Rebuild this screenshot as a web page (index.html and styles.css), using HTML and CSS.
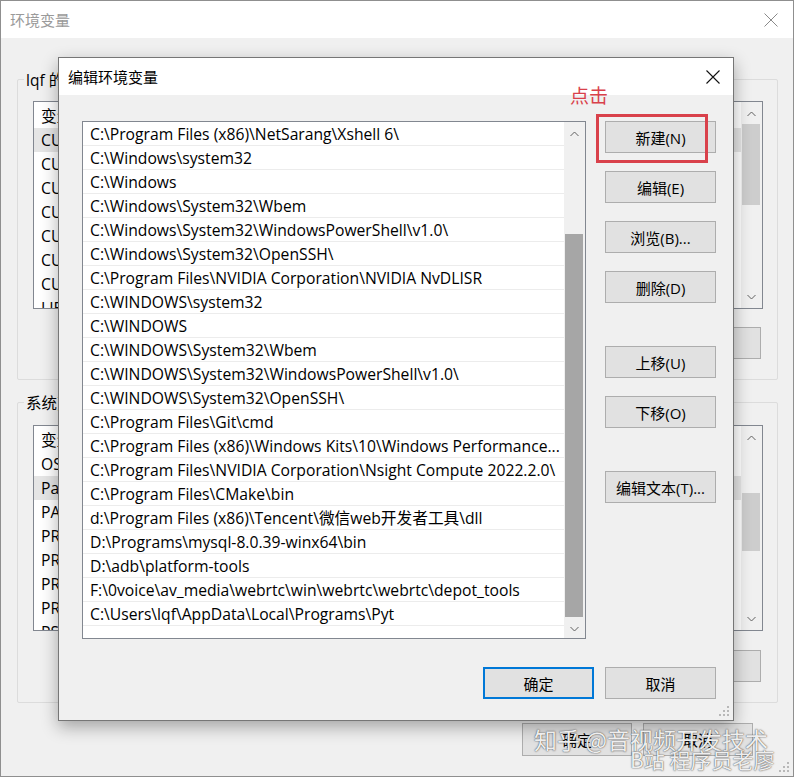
FILE: index.html
```html
<!DOCTYPE html>
<html lang="zh-CN">
<head>
<meta charset="utf-8">
<title>编辑环境变量</title>
<link rel="stylesheet" href="styles.css">
</head>
<body>
<div class="desk">
  <div class="bgwin">
    <div class="bg-title">
      <span>环境变量</span>
      <svg class="bg-close" width="14" height="14" viewBox="0 0 14 14"><path d="M0.5 0.5 L13.5 13.5 M13.5 0.5 L0.5 13.5" stroke="#8a8a8a" stroke-width="1" fill="none"/></svg>
    </div>
    <div class="bg-body">
      <div class="group group-user">
        <div class="group-label">lqf 的用户变量(U)</div>
        <div class="lb lb-user">
          <div class="lb-rows">
            <div class="lb-head"><span class="c1">变量</span><span class="c2">值</span></div>
            <div class="lb-row sel"><span class="c1">CUDA_PATH</span><span class="c2">C:\Program Files\NVIDIA GPU Computing Toolkit</span></div>
            <div class="lb-row"><span class="c1">CUDA_PATH_V11_8</span><span class="c2">C:\Program Files\NVIDIA GPU Computing Toolkit</span></div>
            <div class="lb-row"><span class="c1">CUDA_PATH_V12_0</span><span class="c2">C:\Program Files\NVIDIA GPU Computing Toolkit</span></div>
            <div class="lb-row"><span class="c1">CUDNN_HOME</span><span class="c2">C:\Program Files\NVIDIA\CUDNN</span></div>
            <div class="lb-row"><span class="c1">CUDA_BIN</span><span class="c2">%CUDA_PATH%\bin</span></div>
            <div class="lb-row"><span class="c1">CUDA_LIB</span><span class="c2">%CUDA_PATH%\lib\x64</span></div>
            <div class="lb-row"><span class="c1">CUDA_INC</span><span class="c2">%CUDA_PATH%\include</span></div>
            <div class="lb-row"><span class="c1">LIBPATH</span><span class="c2">C:\lib</span></div>
          </div>
          <div class="vscroll">
            <div class="arr"><svg width="9" height="6" viewBox="0 0 9 6"><path d="M0.5 5 L4.5 1 L8.5 5" stroke="#606060" fill="none"/></svg></div>
            <div class="track"><div class="thumb thumb-user"></div></div>
            <div class="arr"><svg width="9" height="6" viewBox="0 0 9 6"><path d="M0.5 1 L4.5 5 L8.5 1" stroke="#606060" fill="none"/></svg></div>
          </div>
        </div>
        <div class="btnrow">
          <button class="btn">新建(N)...</button>
          <button class="btn">编辑(E)...</button>
          <button class="btn">删除(D)</button>
        </div>
      </div>

      <div class="group group-sys">
        <div class="group-label">系统变量(S)</div>
        <div class="lb lb-sys">
          <div class="lb-rows">
            <div class="lb-head"><span class="c1">变量</span><span class="c2">值</span></div>
            <div class="lb-row"><span class="c1">OS</span><span class="c2">Windows_NT</span></div>
            <div class="lb-row sel"><span class="c1">Path</span><span class="c2">C:\Program Files (x86)\NetSarang\Xshell 6\</span></div>
            <div class="lb-row"><span class="c1">PATHEXT</span><span class="c2">.COM;.EXE;.BAT;.CMD;.VBS;.VBE;.JS</span></div>
            <div class="lb-row"><span class="c1">PROCESSOR_ARCHITECTURE</span><span class="c2">AMD64</span></div>
            <div class="lb-row"><span class="c1">PROCESSOR_IDENTIFIER</span><span class="c2">Intel64 Family 6 Model 151</span></div>
            <div class="lb-row"><span class="c1">PROCESSOR_LEVEL</span><span class="c2">6</span></div>
            <div class="lb-row"><span class="c1">PROCESSOR_REVISION</span><span class="c2">9702</span></div>
            <div class="lb-row"><span class="c1">PSModulePath</span><span class="c2">%ProgramFiles%\WindowsPowerShell</span></div>
          </div>
          <div class="vscroll">
            <div class="arr"><svg width="9" height="6" viewBox="0 0 9 6"><path d="M0.5 5 L4.5 1 L8.5 5" stroke="#606060" fill="none"/></svg></div>
            <div class="track"><div class="thumb thumb-sys"></div></div>
            <div class="arr"><svg width="9" height="6" viewBox="0 0 9 6"><path d="M0.5 1 L4.5 5 L8.5 1" stroke="#606060" fill="none"/></svg></div>
          </div>
        </div>
        <div class="btnrow">
          <button class="btn">新建(W)...</button>
          <button class="btn">编辑(I)...</button>
          <button class="btn">删除(L)</button>
        </div>
      </div>

      <div class="bg-actions">
        <button class="btn btn-bg">确定</button>
        <button class="btn btn-bg">取消</button>
      </div>
    </div>
    <svg class="grip grip-bg" width="11" height="11" viewBox="0 0 11 11"><g fill="#b8b8b8"><rect x="8" y="0" width="2" height="2"/><rect x="4" y="4" width="2" height="2"/><rect x="8" y="4" width="2" height="2"/><rect x="0" y="8" width="2" height="2"/><rect x="4" y="8" width="2" height="2"/><rect x="8" y="8" width="2" height="2"/></g></svg>
  </div>

  <div class="dlg">
    <div class="dlg-title">
      <span>编辑环境变量</span>
      <svg width="14" height="14" viewBox="0 0 14 14"><path d="M0.5 0.5 L13.5 13.5 M13.5 0.5 L0.5 13.5" stroke="#111" stroke-width="1.1" fill="none"/></svg>
    </div>
    <div class="dlg-body">
      <div class="dlg-main">
        <div class="plist">
          <div class="plist-rows">
            <div class="prow">C:\Program Files (x86)\NetSarang\Xshell 6\</div>
            <div class="prow">C:\Windows\system32</div>
            <div class="prow">C:\Windows</div>
            <div class="prow">C:\Windows\System32\Wbem</div>
            <div class="prow">C:\Windows\System32\WindowsPowerShell\v1.0\</div>
            <div class="prow">C:\Windows\System32\OpenSSH\</div>
            <div class="prow">C:\Program Files\NVIDIA Corporation\NVIDIA NvDLISR</div>
            <div class="prow">C:\WINDOWS\system32</div>
            <div class="prow">C:\WINDOWS</div>
            <div class="prow">C:\WINDOWS\System32\Wbem</div>
            <div class="prow">C:\WINDOWS\System32\WindowsPowerShell\v1.0\</div>
            <div class="prow">C:\WINDOWS\System32\OpenSSH\</div>
            <div class="prow">C:\Program Files\Git\cmd</div>
            <div class="prow">C:\Program Files (x86)\Windows Kits\10\Windows Performance...</div>
            <div class="prow">C:\Program Files\NVIDIA Corporation\Nsight Compute 2022.2.0\</div>
            <div class="prow">C:\Program Files\CMake\bin</div>
            <div class="prow">d:\Program Files (x86)\Tencent\微信web开发者工具\dll</div>
            <div class="prow">D:\Programs\mysql-8.0.39-winx64\bin</div>
            <div class="prow">D:\adb\platform-tools</div>
            <div class="prow">F:\0voice\av_media\webrtc\win\webrtc\webrtc\depot_tools</div>
            <div class="prow">C:\Users\lqf\AppData\Local\Programs\Pyt</div>
            <div class="prow"></div>
          </div>
          <div class="vscroll vscroll-p">
            <div class="arr"><svg width="9" height="6" viewBox="0 0 9 6"><path d="M0.5 5 L4.5 1 L8.5 5" stroke="#606060" fill="none"/></svg></div>
            <div class="track"><div class="thumb thumb-p"></div></div>
            <div class="arr"><svg width="9" height="6" viewBox="0 0 9 6"><path d="M0.5 1 L4.5 5 L8.5 1" stroke="#606060" fill="none"/></svg></div>
          </div>
        </div>
        <div class="dlg-btns">
          <button class="btn btn-d">新建(N)</button>
          <button class="btn btn-d">编辑(E)</button>
          <button class="btn btn-d">浏览(B)...</button>
          <button class="btn btn-d">删除(D)</button>
          <button class="btn btn-d gap-lg">上移(U)</button>
          <button class="btn btn-d">下移(O)</button>
          <button class="btn btn-d gap-lg">编辑文本(T)...</button>
        </div>
      </div>
      <div class="dlg-actions">
        <button class="btn btn-d btn-default">确定</button>
        <button class="btn btn-d">取消</button>
      </div>
    </div>
    <div class="note">点击</div>
    <div class="note-box"></div>
    <svg class="grip grip-dlg" width="11" height="11" viewBox="0 0 11 11"><g fill="#b8b8b8"><rect x="8" y="0" width="2" height="2"/><rect x="4" y="4" width="2" height="2"/><rect x="8" y="4" width="2" height="2"/><rect x="0" y="8" width="2" height="2"/><rect x="4" y="8" width="2" height="2"/><rect x="8" y="8" width="2" height="2"/></g></svg>
  </div>

  <div class="wm wm1">知乎 @音视频开发技术</div>
  <div class="wm wm2">B站 程序员老廖</div>
</div>
</body>
</html>
```

FILE: styles.css
```css
* { box-sizing: border-box; }
html, body { margin: 0; padding: 0; }
body {
  width: 794px;
  height: 777px;
  overflow: hidden;
  background: #f0f0f0;
  font-family: "Open Sans", "Noto Sans CJK SC", sans-serif;
  color: #000;
}
.desk { position: relative; width: 794px; height: 777px; }

/* background window */
.bgwin {
  position: relative;
  width: 794px;
  height: 777px;
  border: 1px solid #8f8f8f;
  background: #f0f0f0;
  display: flex;
  flex-direction: column;
}
.bg-title {
  height: 37px;
  flex: none;
  background: #fff;
  display: flex;
  align-items: center;
  justify-content: space-between;
  padding: 0 15px 0 9px;
  color: #9a9a9a;
  font-size: 15px;
  font-family: "Noto Sans CJK SC", sans-serif;
}
.bg-body { padding: 41px 15px 0 16px; }
.group {
  border: 1px solid #dcdcdc;
  border-radius: 2px;
  padding: 0 14px 20px 15px;
}
.group-sys { margin-top: 22px; }
.group-label {
  display: table;
  margin: -10px 0 0 -9px;
  padding: 0 2px;
  background: #f0f0f0;
  line-height: 20px;
  font-size: 15.5px;
}
.lb {
  display: flex;
  border: 1px solid #828790;
  background: #fff;
  overflow: hidden;
}
.lb-user { margin-top: 11px; height: 208px; }
.lb-sys { margin-top: 12px; height: 206px; }
.lb-rows { flex: 1; overflow: hidden; font-size: 15.7px; }
.lb-head, .lb-row {
  display: flex;
  align-items: center;
  white-space: nowrap;
  padding-left: 7px;
}
.lb-head { height: 26px; }
.lb-row { height: 24px; }
.lb-row.sel { background: #e5e5e5; }
.c1 { width: 230px; flex: none; overflow: hidden; }
.c2 { flex: none; max-width: 420px; overflow: hidden; }

.vscroll {
  width: 21px;
  flex: none;
  background: #f0f0f0;
  display: flex;
  flex-direction: column;
}
.arr {
  height: 23px;
  flex: none;
  display: flex;
  align-items: center;
  justify-content: center;
}
.track { flex: 1; }
.thumb { margin: 0 2px 0 1px; background: #cdcdcd; }
.thumb-user { height: 81px; margin-top: -1px; }
.thumb-sys { height: 58px; margin-top: 44px; }

.btnrow {
  display: flex;
  justify-content: flex-end;
  gap: 12px;
  margin: 18px 2px 0 0;
}
.btn {
  height: 32px;
  background: #e1e1e1;
  border: 1px solid #adadad;
  font-family: "Open Sans", "Noto Sans CJK SC", sans-serif;
  font-size: 15px;
  color: #000;
  padding: 0;
  display: flex;
  align-items: center;
  justify-content: center;
}
.btnrow .btn { width: 110px; }
.group-sys .btnrow { margin-top: 19px; }
.bg-actions {
  display: flex;
  justify-content: flex-end;
  gap: 11px;
  margin: 20px 25px 0 0;
}
.btn-bg { width: 110px; height: 33px; }

.grip { position: absolute; }
.grip-bg { right: 3px; bottom: 3px; }
.grip-dlg { right: 3px; bottom: 3px; }

/* front dialog */
.dlg {
  position: absolute;
  left: 58px;
  top: 57px;
  width: 676px;
  height: 664px;
  border: 1px solid #767676;
  background: #f0f0f0;
  box-shadow: 0 6px 16px rgba(0, 0, 0, 0.32);
  display: flex;
  flex-direction: column;
}
.dlg-title {
  height: 37px;
  flex: none;
  background: #fff;
  display: flex;
  align-items: center;
  justify-content: space-between;
  padding: 0 13px 0 9px;
  font-size: 15px;
  font-family: "Noto Sans CJK SC", sans-serif;
}
.dlg-body {
  flex: 1;
  padding: 26px 17px 0 23px;
  display: flex;
  flex-direction: column;
}
.dlg-main { display: flex; gap: 19px; }
.plist {
  width: 504px;
  height: 518px;
  border: 1px solid #828790;
  background: #fff;
  display: flex;
  overflow: hidden;
}
.plist-rows { flex: 1; overflow: hidden; font-size: 15.7px; }
.prow {
  height: 24px;
  border-bottom: 1px solid #ececec;
  padding: 0 0 0 7px;
  line-height: 24px;
  white-space: nowrap;
  overflow: hidden;
}
.vscroll-p { background: #f0f0f0; }
.thumb-p { height: 383px; margin-top: 89px; background: #a6a6a6; }

.dlg-btns {
  width: 111px;
  display: flex;
  flex-direction: column;
  gap: 18px;
}
.btn-d { width: 111px; height: 32px; }
.gap-lg { margin-top: 25px; }
.dlg-actions {
  display: flex;
  justify-content: flex-end;
  gap: 11px;
  margin-top: 28px;
}
.btn-default { border: 2px solid #0078d7; }

.note {
  position: absolute;
  left: 511px;
  top: 25px;
  font-size: 19px;
  line-height: 24px;
  color: #d9414b;
  font-family: "Noto Sans CJK SC", sans-serif;
}
.note-box {
  position: absolute;
  left: 537px;
  top: 56px;
  width: 112px;
  height: 49px;
  border: 3px solid #d9414b;
}

/* watermark */
.wm {
  position: absolute;
  white-space: nowrap;
  color: rgba(255, 255, 255, 0.92);
  font-family: "Noto Sans CJK SC", sans-serif;
  text-shadow: 0 0 1px rgba(60, 60, 60, 0.9), 0 0 2px rgba(60, 60, 60, 0.6);
}
.wm1 { left: 534px; top: 724px; font-size: 23px; line-height: 30px; }
.wm2 { left: 630px; top: 745px; font-size: 21px; line-height: 28px; }
```
